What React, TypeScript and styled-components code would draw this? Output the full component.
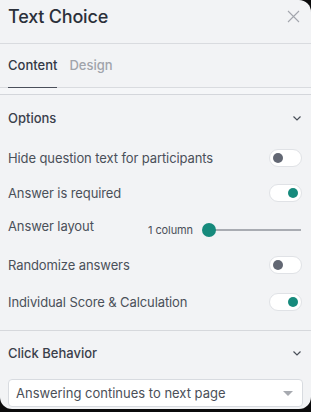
import React from 'react';
import styled, { createGlobalStyle } from 'styled-components';

const GlobalStyle = createGlobalStyle`
  html, body {
    margin: 0;
    padding: 0;
    background: #0b0b0c;
  }
  body {
    font-family: Inter, "Noto Sans", sans-serif;
  }
`;

const Panel = styled.div`
  width: 311px;
  height: 409px;
  background: #f2f3f5;
  border-radius: 0 12px 12px 12px;
  overflow: hidden;
  display: flex;
  flex-direction: column;
`;

const Header = styled.div`
  height: 44px;
  display: flex;
  align-items: center;
  justify-content: space-between;
  padding: 0 10px 0 8px;
  border-bottom: 1px solid #d9dbdf;
  box-sizing: border-box;
`;

const Title = styled.h1`
  margin: 0;
  font-size: 18px;
  font-weight: 500;
  color: #2b303a;
  letter-spacing: -0.2px;
  margin-top: -10px;
`;

const CloseButton = styled.button`
  border: 0;
  background: none;
  padding: 0;
  width: 16px;
  height: 16px;
  display: flex;
  align-items: center;
  justify-content: center;
  margin-top: -10px;
`;

const Tabs = styled.div`
  height: 44px;
  display: flex;
  align-items: stretch;
  gap: 12px;
  padding: 0 8px;
  border-bottom: 1px solid #d9dbdf;
  box-sizing: border-box;
`;

const Tab = styled.div<{ $active?: boolean }>`
  display: flex;
  align-items: center;
  padding-bottom: 2px;
  font-size: 13px;
  font-weight: 500;
  color: ${({ $active }) => ($active ? '#333945' : '#a0a4ab')};
  border-bottom: 1px solid ${({ $active }) => ($active ? '#4a4f5a' : 'transparent')};
  margin-bottom: -1px;
`;

const Gap = styled.div`
  height: 6px;
  background: #f5f6f8;
  border-bottom: 1px solid #d4d6db;
`;

const Section = styled.div<{ $divider?: boolean }>`
  padding: 0 8px;
  border-bottom: ${({ $divider }) => ($divider ? '1px solid #d6d8dc' : 'none')};
`;

const SectionHeader = styled.div<{ $top?: number }>`
  height: 44px;
  padding-top: ${({ $top }) => $top ?? 0}px;
  display: flex;
  align-items: center;
  justify-content: space-between;
  font-size: 13px;
  font-weight: 500;
  color: #3a404b;
`;

const Row = styled.div<{ $h?: number }>`
  height: ${({ $h }) => $h ?? 35}px;
  display: flex;
  align-items: center;
  justify-content: space-between;
  font-size: 13px;
  letter-spacing: -0.1px;
  color: #4a5059;
`;

const Toggle = styled.div<{ $on?: boolean }>`
  width: 31px;
  height: 16px;
  border-radius: 9px;
  background: #ffffff;
  border: 1px solid #e0e2e6;
  position: relative;
  margin-right: 1px;
  &::after {
    content: '';
    position: absolute;
    top: 3px;
    left: ${({ $on }) => ($on ? '18px' : '3px')};
    width: 10px;
    height: 10px;
    border-radius: 50%;
    background: ${({ $on }) => ($on ? '#168a7c' : '#626773')};
  }
`;

const SliderGroup = styled.div`
  display: flex;
  align-items: center;
  gap: 16px;
  margin-top: 8px;
`;

const SliderLabel = styled.span`
  font-size: 11px;
  color: #4b5059;
`;

const SliderTrack = styled.div`
  width: 92px;
  height: 2px;
  background: #a9acb2;
  position: relative;
  margin-right: 2px;
`;

const SliderKnob = styled.div`
  position: absolute;
  left: -7px;
  top: -6px;
  width: 14px;
  height: 14px;
  border-radius: 50%;
  background: #168a7c;
`;

const Select = styled.div`
  height: 26px;
  margin-top: 4px;
  background: #ffffff;
  border: 1px solid #d8dbe0;
  border-radius: 4px;
  display: flex;
  align-items: center;
  justify-content: space-between;
  padding: 0 9px 0 7px;
  font-size: 13px;
  color: #4a4f58;
`;

const Caret = styled.span`
  width: 0;
  height: 0;
  border-left: 5px solid transparent;
  border-right: 5px solid transparent;
  border-top: 5px solid #a7aab0;
`;

const Spacer = styled.div`
  height: 15px;
`;

const Chevron = () => (
  <svg width="12" height="12" viewBox="0 0 12 12" fill="none" stroke="#4a4f59" strokeWidth="1.2">
    <path d="M2.5 4.5 L6 8 L9.5 4.5" />
  </svg>
);

export default function App() {
  return (
    <>
      <GlobalStyle />
      <Panel>
        <Header>
          <Title>Text Choice</Title>
          <CloseButton aria-label="Close">
            <svg width="13" height="13" viewBox="0 0 13 13" stroke="#a3a6ad" strokeWidth="1.1">
              <path d="M1 1 L12 12 M12 1 L1 12" />
            </svg>
          </CloseButton>
        </Header>
        <Tabs>
          <Tab $active>Content</Tab>
          <Tab>Design</Tab>
        </Tabs>
        <Gap />
        <Section $divider>
          <SectionHeader $top={1}>
            Options
            <Chevron />
          </SectionHeader>
          <Row $h={35}>
            Hide question text for participants
            <Toggle />
          </Row>
          <Row $h={35}>
            Answer is required
            <Toggle $on />
          </Row>
          <Row $h={31}>
            Answer layout
            <SliderGroup>
              <SliderLabel>1 column</SliderLabel>
              <SliderTrack>
                <SliderKnob />
              </SliderTrack>
            </SliderGroup>
          </Row>
          <Row $h={48}>
            Randomize answers
            <Toggle />
          </Row>
          <Row $h={26}>
            Individual Score &amp; Calculation
            <Toggle $on />
          </Row>
          <Spacer />
        </Section>
        <Section>
          <SectionHeader>
            Click Behavior
            <Chevron />
          </SectionHeader>
          <Select>
            Answering continues to next page
            <Caret />
          </Select>
        </Section>
      </Panel>
    </>
  );
}
